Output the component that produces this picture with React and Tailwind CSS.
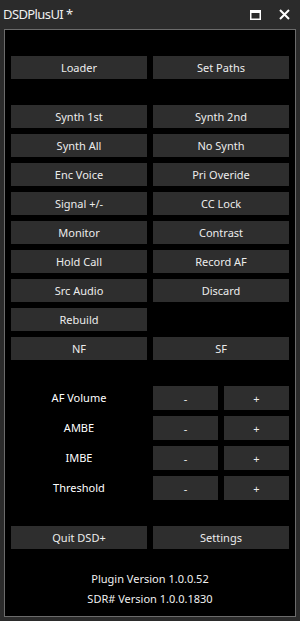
import React from "react";

const rows = [
  ["Synth 1st", "Synth 2nd"],
  ["Synth All", "No Synth"],
  ["Enc Voice", "Pri Overide"],
  ["Signal +/-", "CC Lock"],
  ["Monitor", "Contrast"],
  ["Hold Call", "Record AF"],
  ["Src Audio", "Discard"],
  ["Rebuild", null],
  ["NF", "SF"],
];

const levels = ["AF Volume", "AMBE", "IMBE", "Threshold"];

const Btn = ({ children, className = "" }) => (
  <button
    className={
      "h-[23px] bg-[#2e2e2e] text-[#ececec] text-[11px] leading-none flex items-center justify-center " +
      className
    }
  >
    {children}
  </button>
);

const App = () => {
  return (
    <div
      className="w-[300px] h-[621px] bg-[#2b2b2b] flex flex-col"
      style={{ fontFamily: '"Noto Sans", "Open Sans", sans-serif' }}
    >
      {/* title bar */}
      <div className="h-[29px] flex items-center pl-[3px] pr-[10px]">
        <span className="text-[13px] text-[#f0f0f0] tracking-[-0.6px]">DSDPlusUI *</span>
        <div className="ml-auto flex items-center gap-[18px]">
          <svg width="11" height="10" viewBox="0 0 11 10">
            <rect x="0.75" y="0.75" width="9.5" height="8.5" fill="none" stroke="#fff" strokeWidth="1.5" />
            <rect x="0.5" y="0.5" width="10" height="2.5" fill="#fff" />
          </svg>
          <svg width="11" height="11" viewBox="0 0 11 11">
            <path d="M1 1 L10 10 M10 1 L1 10" stroke="#fff" strokeWidth="2" />
          </svg>
        </div>
      </div>

      {/* panel */}
      <div className="ml-[4px] mr-[4px] h-[588px] border border-[#6b6b6b] bg-black px-[6px] pt-[26px]">
        <div className="grid grid-cols-2 gap-[6px]">
          <Btn>Loader</Btn>
          <Btn>Set Paths</Btn>
        </div>

        <div className="mt-[26px] grid grid-cols-2 gap-[6px]">
          {rows.map(([a, b], i) => (
            <React.Fragment key={i}>
              <Btn>{a}</Btn>
              {b ? <Btn>{b}</Btn> : <div />}
            </React.Fragment>
          ))}
        </div>

        <div className="mt-[26px] flex flex-col gap-[6px]">
          {levels.map((l) => (
            <div key={l} className="grid grid-cols-2 gap-[6px]">
              <div className="h-[24px] flex items-center justify-center text-[11px] text-white">{l}</div>
              <div className="grid grid-cols-2 gap-[6px]">
                <Btn className="h-[24px]">-</Btn>
                <Btn className="h-[24px]">+</Btn>
              </div>
            </div>
          ))}
        </div>

        <div className="mt-[26px] grid grid-cols-2 gap-[6px]">
          <Btn>Quit DSD+</Btn>
          <Btn>Settings</Btn>
        </div>

        <div className="mt-[21px] flex flex-col items-center gap-[1px] text-[11px] text-[#f0f0f0]">
          <div className="h-[19px] flex items-center">Plugin Version 1.0.0.52</div>
          <div className="h-[19px] flex items-center">SDR# Version 1.0.0.1830</div>
        </div>
      </div>
    </div>
  );
};

export default App;
